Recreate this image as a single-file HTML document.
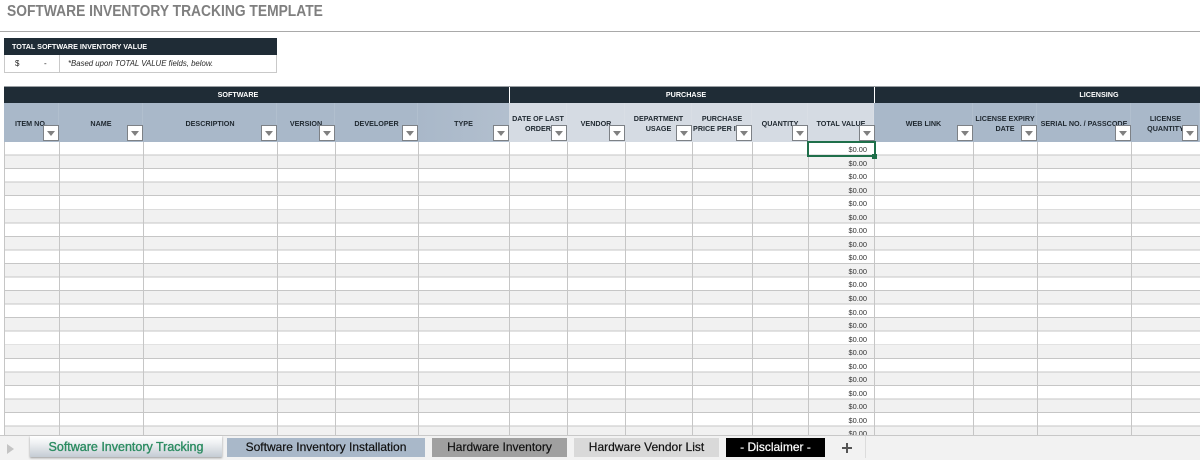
<!DOCTYPE html>
<html><head><meta charset="utf-8"><style>
html,body{margin:0;padding:0;background:#fff}
#p{position:relative;width:1200px;height:460px;overflow:hidden;background:#fff;font-family:"Liberation Sans",sans-serif;filter:blur(.3px)}
#p div{position:absolute;box-sizing:border-box}
.h{color:#1f2830;font-weight:bold;font-size:7.2px;line-height:10px;text-align:center;white-space:nowrap;top:103px;height:39px;display:flex;align-items:center;justify-content:center;padding:2px 0 0 1px;border-right:1px solid rgba(255,255,255,.1)}
.d{top:125px;width:16px;height:16px;background:#fff;border:1px solid #7d8186}
.d:after{content:"";position:absolute;left:2.5px;top:5px;border-left:4.5px solid transparent;border-right:4.5px solid transparent;border-top:5px solid #808080}
.s{top:87px;height:16px;background:#1f2c36;color:#fff;font-weight:bold;font-size:7.2px;line-height:15px;text-align:center}
.v{top:142px;width:1px;height:293px;background:#c6c6c6}
.t{top:438px;height:19px;font-size:12px;line-height:19px;text-align:center;color:#111;white-space:nowrap;-webkit-text-stroke:.2px #111}
</style></head><body><div id="p">
<div style="left:7px;top:2px;font-size:15.8px;line-height:20px;font-weight:bold;color:#7f7f7f;white-space:nowrap;transform:scaleX(.875);transform-origin:0 0">SOFTWARE INVENTORY TRACKING TEMPLATE</div>
<div style="left:0;top:31px;width:1200px;height:1px;background:#a9a9a9"></div>

<div style="left:4px;top:38px;width:273px;height:17px;background:#1f2c36;color:#fff;font-size:7.2px;font-weight:bold;line-height:17px;padding-left:8px;white-space:nowrap">TOTAL SOFTWARE INVENTORY VALUE</div>
<div style="left:4px;top:55px;width:273px;height:18px;background:#fff;border:1px solid #c9c9c9;border-top:0"></div>
<div style="left:59px;top:55px;width:1px;height:17px;background:#c9c9c9"></div>
<div style="left:15px;top:58px;font-size:8px;line-height:11px;color:#222">$</div>
<div style="left:44px;top:58px;font-size:8px;line-height:11px;color:#222">-</div>
<div style="left:68px;top:58px;font-size:7.8px;line-height:11px;color:#2a2a2a;font-style:italic;white-space:nowrap">*Based upon TOTAL VALUE fields, below.</div>

<div style="left:4px;top:142px;width:1196px;height:293px;background:repeating-linear-gradient(to bottom,#fff 0,#fff 12.55px,#c6c6c6 12.55px,#c6c6c6 13.55px,#f1f1f1 13.55px,#f1f1f1 26.1px,#c6c6c6 26.1px,#c6c6c6 27.1px)"></div>

<div class="s" style="left:4px;width:505px;padding-right:37px">SOFTWARE</div>
<div class="s" style="left:510px;width:364px;padding-right:12px">PURCHASE</div>
<div class="s" style="left:875px;width:325px;padding-left:123px">LICENSING</div>
<div style="left:4px;top:86px;width:1196px;height:1px;background:#9a9fa3"></div>

<div class="h" style="left:4px;width:55px;background:#a9b8c9;justify-content:flex-start;padding-left:11px">ITEM NO.</div>
<div class="h" style="left:59px;width:84px;background:#a9b8c9">NAME</div>
<div class="h" style="left:143px;width:134px;background:#a9b8c9">DESCRIPTION</div>
<div class="h" style="left:277px;width:58px;background:#a9b8c9">VERSION</div>
<div class="h" style="left:335px;width:83px;background:#a9b8c9">DEVELOPER</div>
<div class="h" style="left:418px;width:91px;background:linear-gradient(to right,#a9b8c9,#b2bfce)">TYPE</div>
<div class="h" style="left:509px;width:58px;background:#d5dbe3">DATE OF LAST<br>ORDER</div>
<div class="h" style="left:567px;width:58px;background:#d5dbe3">VENDOR</div>
<div class="h" style="left:625px;width:67px;background:#d5dbe3">DEPARTMENT<br>USAGE</div>
<div class="h" style="left:692px;width:60px;background:#d5dbe3;overflow:hidden">PURCHASE<br>PRICE PER ITEM</div>
<div class="h" style="left:752px;width:56px;background:#d5dbe3">QUANTITY</div>
<div class="h" style="left:808px;width:66px;background:#d5dbe3">TOTAL VALUE</div>
<div class="h" style="left:874px;width:99px;background:#a9b8c9">WEB LINK</div>
<div class="h" style="left:973px;width:64px;background:#a9b8c9">LICENSE EXPIRY<br>DATE</div>
<div class="h" style="left:1037px;width:94px;background:#a9b8c9">SERIAL NO. / PASSCODE</div>
<div class="h" style="left:1131px;width:69px;background:#a9b8c9">LICENSE<br>QUANTITY</div>

<div class="v" style="left:4px"></div><div class="v" style="left:59px"></div><div class="v" style="left:143px"></div><div class="v" style="left:277px"></div><div class="v" style="left:335px"></div><div class="v" style="left:418px"></div><div class="v" style="left:509px"></div><div class="v" style="left:567px"></div><div class="v" style="left:625px"></div><div class="v" style="left:692px"></div><div class="v" style="left:752px"></div><div class="v" style="left:808px"></div><div class="v" style="left:874px"></div><div class="v" style="left:973px"></div><div class="v" style="left:1037px"></div><div class="v" style="left:1131px"></div>

<div class="d" style="left:43px"></div><div class="d" style="left:127px"></div><div class="d" style="left:261px"></div><div class="d" style="left:319px"></div><div class="d" style="left:402px"></div><div class="d" style="left:493px"></div><div class="d" style="left:551px"></div><div class="d" style="left:609px"></div><div class="d" style="left:676px"></div><div class="d" style="left:736px"></div><div class="d" style="left:792px"></div><div class="d" style="left:859px"></div><div class="d" style="left:957px"></div><div class="d" style="left:1021px"></div><div class="d" style="left:1115px"></div><div class="d" style="left:1182px"></div>

<div style="left:808px;top:143px;width:59px;height:292px;overflow:hidden;text-align:right;font-size:7.4px;line-height:13.55px;color:#333">$0.00<br>$0.00<br>$0.00<br>$0.00<br>$0.00<br>$0.00<br>$0.00<br>$0.00<br>$0.00<br>$0.00<br>$0.00<br>$0.00<br>$0.00<br>$0.00<br>$0.00<br>$0.00<br>$0.00<br>$0.00<br>$0.00<br>$0.00<br>$0.00<br>$0.00</div>
<div style="left:807px;top:141px;width:69px;height:16px;border:2px solid #1f6f4a"></div>
<div style="left:872px;top:154px;width:5px;height:5px;background:#1f6f4a"></div>

<div style="left:0;top:435px;width:1200px;height:25px;background:#f2f2f2;border-top:1px solid #c8c8c8"></div>
<div style="left:7px;top:444px;border-left:7px solid #c4c4c4;border-top:5px solid transparent;border-bottom:5px solid transparent"></div>
<div class="t" style="left:30px;top:436px;width:192px;height:21px;line-height:22px;font-size:12.5px;background:linear-gradient(#fff,#eef0f2 35%,#c5ccd4);color:#2c8c62;box-shadow:0 1px 2px #999;-webkit-text-stroke:.35px #2c8c62">Software Inventory Tracking</div>
<div class="t" style="left:227px;width:198px;background:#a9b8c9">Software Inventory Installation</div>
<div class="t" style="left:432px;width:135px;background:#a0a0a0">Hardware Inventory</div>
<div class="t" style="left:574px;width:145px;background:#d9d9d9">Hardware Vendor List</div>
<div class="t" style="left:726px;width:99px;background:#000;color:#fff;-webkit-text-stroke:.2px #fff">- Disclaimer -</div>
<div style="left:865px;top:436px;width:1px;height:22px;background:#dcdcdc"></div>
<div style="left:842px;top:447px;width:10px;height:2px;background:#555"></div>
<div style="left:846px;top:443px;width:2px;height:10px;background:#555"></div>
</div></body></html>
